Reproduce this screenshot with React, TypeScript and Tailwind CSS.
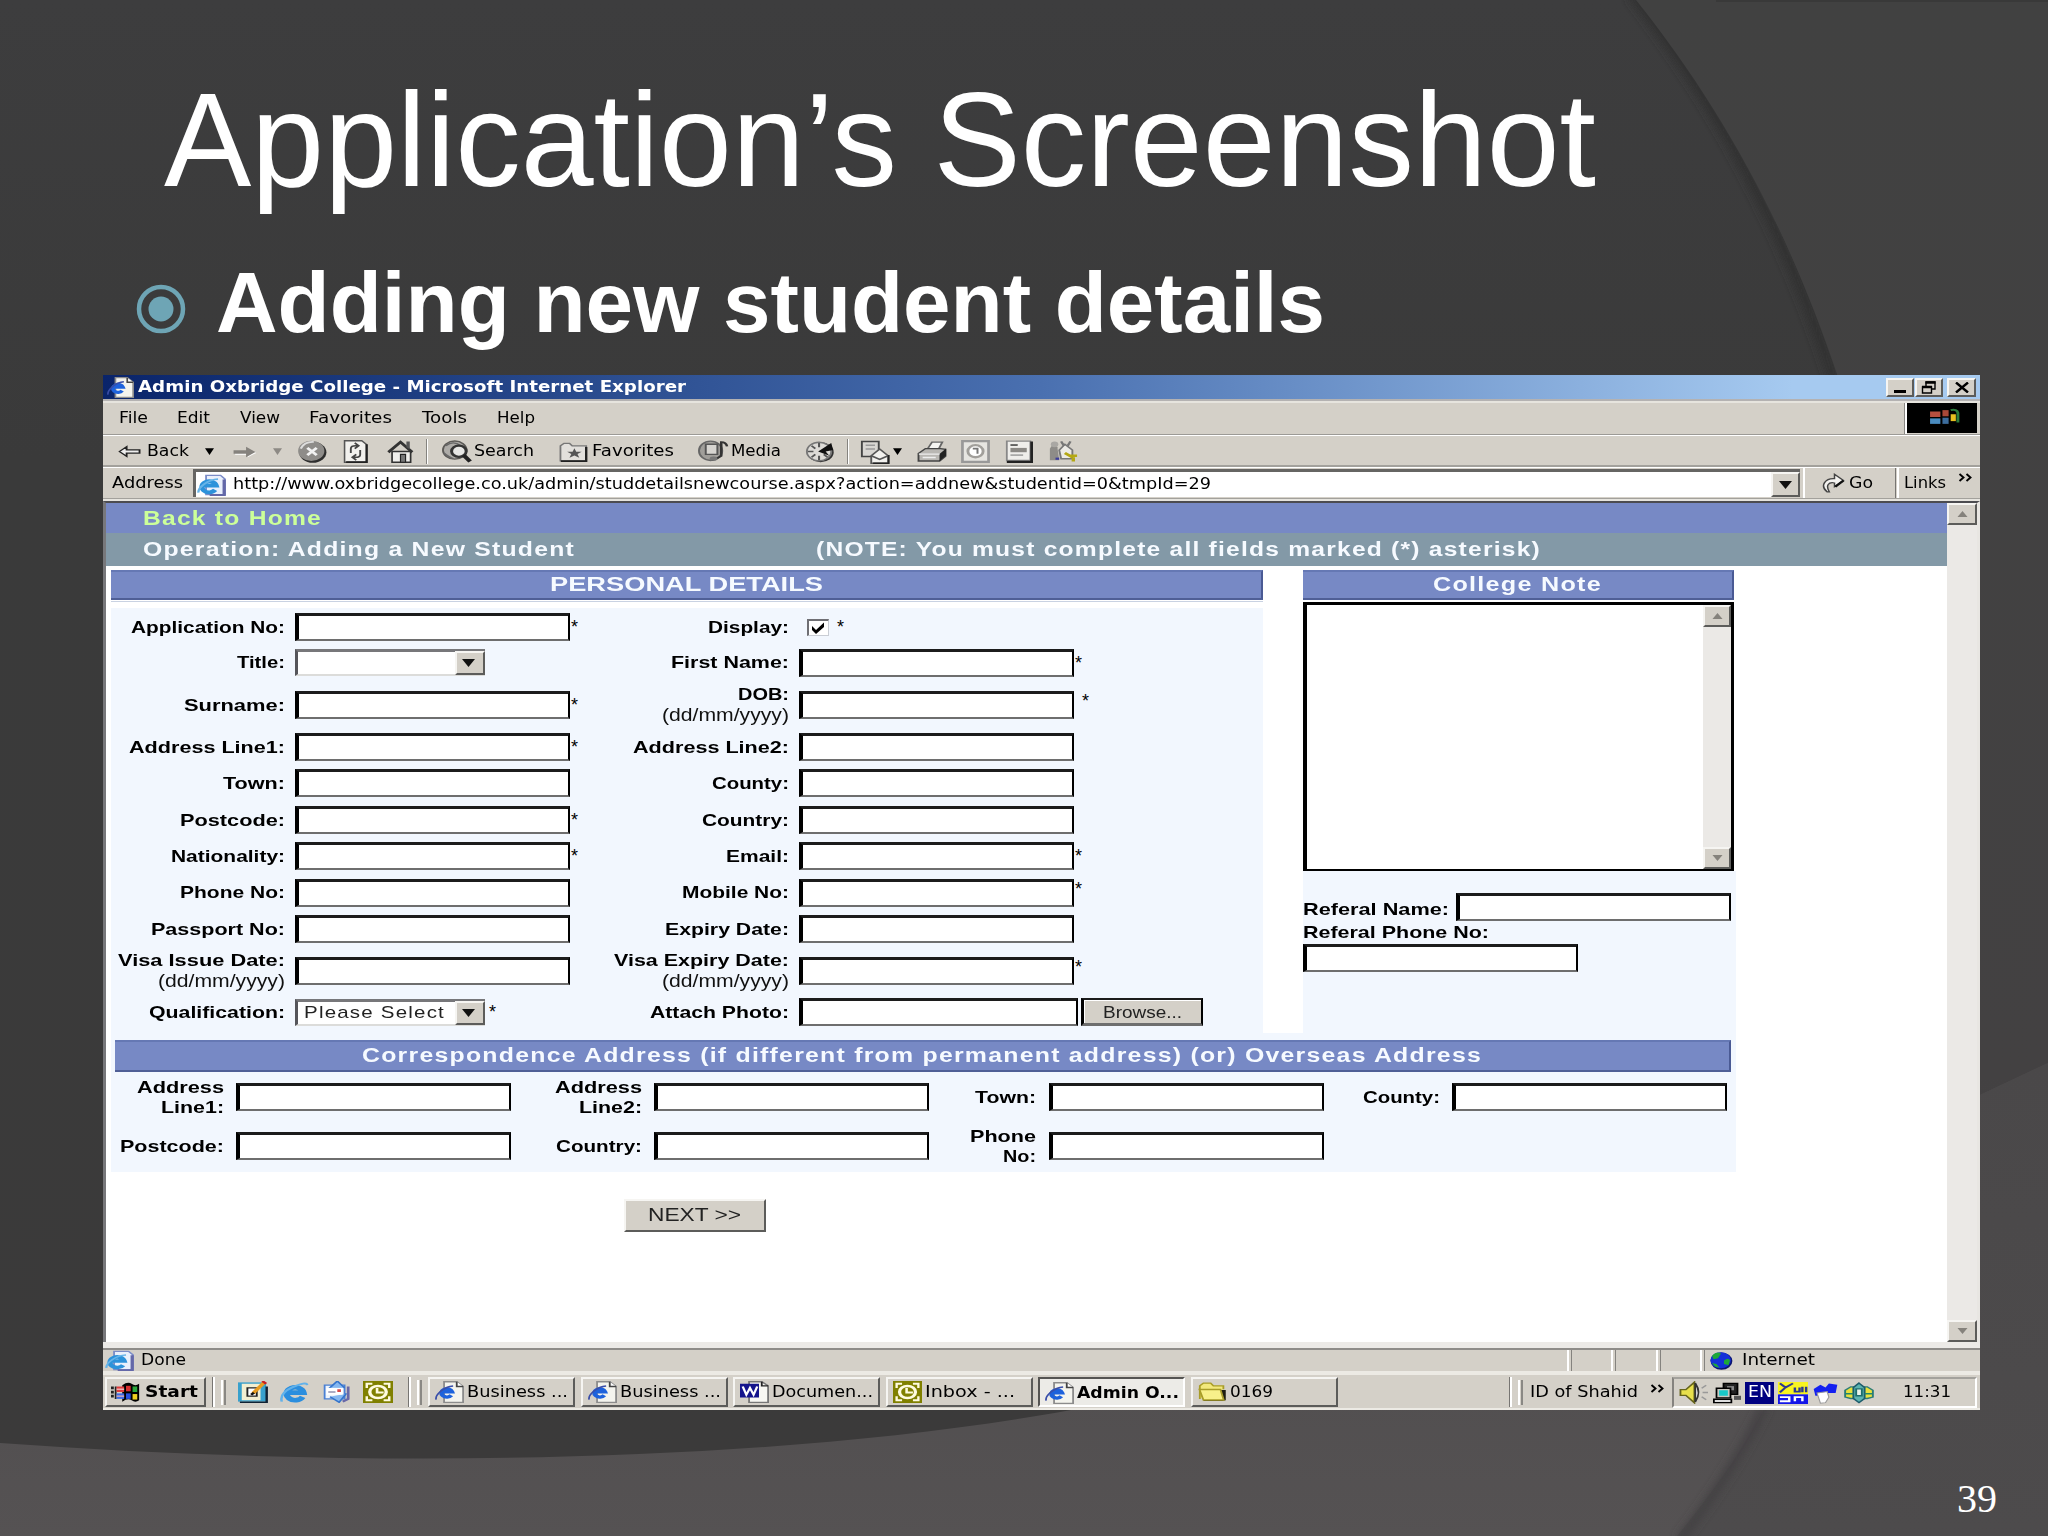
import { useLayoutEffect, useRef } from "react";
import type { ReactNode } from "react";

type FitProps = { w: number; className?: string; children: ReactNode };

// Single line of text stretched horizontally to a given width
const Fit = ({ w, className = "", children }: FitProps) => {
  const ref = useRef<HTMLSpanElement>(null);
  useLayoutEffect(() => {
    const el = ref.current;
    if (!el) return;
    el.style.transform = "none";
    const natural = el.getBoundingClientRect().width;
    el.style.transform = `scaleX(${w / natural})`;
  }, [w, children]);
  return (
    <span
      className={`block shrink-0 leading-none whitespace-nowrap ${className}`}
      style={{ width: w }}
    >
      <span ref={ref} className="inline-block origin-left">
        {children}
      </span>
    </span>
  );
};

type IconProps = { className?: string; children?: ReactNode };

const Icon = ({ className = "h-[23px] w-[29px]", children }: IconProps) => (
  <svg
    viewBox="0 0 16 16"
    preserveAspectRatio="none"
    className={`block shrink-0 ${className}`}
  >
    {children}
  </svg>
);

const IePage = ({ className }: IconProps) => (
  <Icon className={className}>
    <path d="M5 .5h7l3.5 3.5v11.5H5z" fill="#f4f4ee" stroke="#8c8c8c" />
    <path d="M12 .5v3.5h3.5" fill="#fff" stroke="#444" />
    <path d="M9 10.4A3 3 0 1 1 9.4 7.800H4.500" fill="none" stroke="#1d62dc" strokeWidth="2.400" />
    <path d="M.6 13.5C0 10 5 4 10 3.600" fill="none" stroke="#3a4ea8" />
  </Icon>
);

const IePageBlue = ({ className }: IconProps) => (
  <Icon className={className}>
    <path d="M5 1h8l2.4 2.6V15H5z" fill="#eaf0fc" stroke="#7b8cc8" />
    <path d="M15 4v11.5H7" fill="none" stroke="#6468a8" strokeWidth="1.8" />
    <path d="M10 11.6A4 4 0 1 1 10.6 8.4H4" fill="none" stroke="#2d92da" strokeWidth="2.800" />
    <path d="M.8 13.6C.4 10 6 4 11.6 3.8" fill="none" stroke="#67b4e8" strokeWidth="1.300" />
  </Icon>
);

const WinFlag = ({ className }: IconProps) => (
  <Icon className={className}>
    <path d="M6 3q3-3 5-1t4 0v12q-2 2-4 0t-5 1z" fill="#000" />
    <path d="M0 4h1.500v2H0zM0 7h1.500v2H0zM0 10h1.500v2H0zM2 4h1v9H2z" fill="#222" />
    <path d="M3 4h4v4H3z" fill="#e03c3c" />
    <path d="M3 9h4v4H3z" fill="#3c6ce8" />
    <path d="M3 6h4M3 11h4" stroke="#f0b0b0" />
    <path d="M8 3.5h2.500v4H8z" fill="#d83030" />
    <path d="M8 9h2.500v4H8z" fill="#2850e0" />
    <path d="M11.500 4H14v4h-2.500z" fill="#2aa83c" />
    <path d="M11.500 9.500H14v4h-2.500z" fill="#f0d020" />
  </Icon>
);

const Outlook = ({ className }: IconProps) => (
  <Icon className={className}>
    <path d="M0 0h16v16H0z" fill="#808000" />
    <path d="M2 5V2h3M11 2h3v3M14 11v3h-3M5 14H2v-3" fill="none" stroke="#fffbe0" strokeWidth="1.300" />
    <circle cx="8" cy="8" r="4.4" fill="#808000" stroke="#fffbe0" strokeWidth="1.8" />
    <path d="M7.5 5v3.4H11" fill="none" stroke="#fffbe0" strokeWidth="1.4" />
  </Icon>
);

const WordDoc = ({ className }: IconProps) => (
  <Icon className={className}>
    <path d="M5 .5h7l3.5 3V15.5H5z" fill="#f7f7f2" stroke="#777" />
    <path d="M12 .5v3h3.5" fill="none" stroke="#222" />
    <path d="M0 2h10.500v10H0z" fill="#14148c" />
    <path d="M1.5 4l2 6L5.5 5l2 5 2-6" fill="none" stroke="#fff" strokeWidth="1.3" />
  </Icon>
);

const Folder = ({ className }: IconProps) => (
  <Icon className={className}>
    <path d="M1 13V3.5L3 1.5h4l1.5 2H14V6" fill="#f2e87c" stroke="#a89c28" />
    <path d="M3.5 6.5h11.8V14l-2 .5H3z" fill="#1c1c10" />
    <path d="M.8 6.2h11.6l1.8 7.6H3z" fill="#f8f08a" stroke="#a89c28" />
  </Icon>
);

const Caret = ({ className = "text-black" }: IconProps) => (
  <svg viewBox="0 0 8 6" className={`block h-[7px] w-[9px] shrink-0 ${className}`}>
    <path d="M0 0h8L4 6z" fill="currentColor" />
  </svg>
);

const WideCaret = () => (
  <svg viewBox="0 0 13 8" className="block h-[8px] w-[13px] shrink-0">
    <path d="M0 0h13L6.500 8z" fill="#111" />
  </svg>
);

const Chevrons = () => (
  <svg viewBox="0 0 14 9" className="block h-[9px] w-[15px] shrink-0">
    <path d="M1 1l4 3.5L1 8M8 1l4 3.5L8 8" fill="none" stroke="#000" strokeWidth="1.9" />
  </svg>
);

const bevel =
  "border-2 border-t-[#f6f5f2] border-l-[#f6f5f2] border-r-[#5c5c5a] border-b-[#5c5c5a] bg-[#d4d0c8]";

const ScrollButton = ({ up = false }: { up?: boolean }) => (
  <div className={`flex h-[22px] shrink-0 items-center justify-center ${bevel}`}>
    <svg viewBox="0 0 10 6" className="h-[6px] w-[11px]">
      <path d={up ? "M5 0l5 6H0z" : "M0 0h10L5 6z"} fill="#85827c" />
    </svg>
  </div>
);

const Scrollbar = ({ className }: { className: string }) => (
  <div className={`flex flex-col justify-between bg-[#ebe9e6] ${className}`}>
    <ScrollButton up />
    <ScrollButton />
  </div>
);

const Field = ({ className = "w-[275px]" }: { className?: string }) => (
  <div
    className={`h-[28px] shrink-0 border-t-[3px] border-r-2 border-b-2 border-l-4 border-t-[#1c1c1c] border-r-black border-b-[#6e6e6e] border-l-black bg-white ${className}`}
  />
);

const Select = ({ text }: { text?: string }) => (
  <div className="flex h-[27px] w-[190px] shrink-0 items-center border-t-[3px] border-b-2 border-l-[3px] border-t-[#77777a] border-b-[#dcdcda] border-l-[#55555a] bg-white">
    <div className="flex-1 pl-[6px]">
      {text && (
        <Fit w={141} className="text-[17px] tracking-[1px] text-[#222]">
          {text}
        </Fit>
      )}
    </div>
    <div className={`flex h-[24px] w-[30px] items-center justify-center pr-[3px] ${bevel}`}>
      <WideCaret />
    </div>
  </div>
);

const Star = ({ className = "" }: { className?: string }) => (
  <span className={`pl-px text-[18px] leading-none ${className}`}>*</span>
);

type Label = { text: string; w: number; hint?: boolean };

const LabelText = ({ text, w, hint }: Label) => (
  <div className="flex flex-col items-end">
    <Fit w={w} className="text-[17px] font-bold">
      {text}
    </Fit>
    {hint && (
      <Fit w={127} className="mt-[3px] text-[18px] text-[#111]">
        (dd/mm/yyyy)
      </Fit>
    )}
  </div>
);

type FormRow = {
  h: string;
  left: Label;
  right: Label;
  leftControl: ReactNode;
  rightControl: ReactNode;
};

const starred = (
  <>
    <Field />
    <Star />
  </>
);

const rows: FormRow[] = [
  {
    h: "h-[36px]",
    left: { text: "Application No:", w: 154 },
    right: { text: "Display:", w: 81 },
    leftControl: starred,
    rightControl: (
      <>
        <div className="ml-[8px] h-[17px] w-[22px] border-t-2 border-r border-b border-l-2 border-t-[#6f6f74] border-r-[#c9cdd4] border-b-[#c9cdd4] border-l-[#6f6f74] bg-white">
          <svg viewBox="0 0 18 14" className="h-[14px] w-[18px]">
            <path d="M3 5l4 4 8-7.500v4.500L7 13 3 9z" fill="#000" />
          </svg>
        </div>
        <Star className="ml-[7px]" />
      </>
    ),
  },
  {
    h: "h-[35px]",
    left: { text: "Title:", w: 48 },
    right: { text: "First Name:", w: 118 },
    leftControl: <Select />,
    rightControl: starred,
  },
  {
    h: "h-[50px]",
    left: { text: "Surname:", w: 101 },
    right: { text: "DOB:", w: 51, hint: true },
    leftControl: starred,
    rightControl: (
      <>
        <Field />
        <Star className="-mt-2 ml-[7px]" />
      </>
    ),
  },
  {
    h: "h-[34px]",
    left: { text: "Address Line1:", w: 156 },
    right: { text: "Address Line2:", w: 156 },
    leftControl: starred,
    rightControl: <Field />,
  },
  {
    h: "h-[38px]",
    left: { text: "Town:", w: 62 },
    right: { text: "County:", w: 77 },
    leftControl: <Field />,
    rightControl: <Field />,
  },
  {
    h: "h-[36px]",
    left: { text: "Postcode:", w: 105 },
    right: { text: "Country:", w: 87 },
    leftControl: starred,
    rightControl: <Field />,
  },
  {
    h: "h-[36px]",
    left: { text: "Nationality:", w: 114 },
    right: { text: "Email:", w: 63 },
    leftControl: starred,
    rightControl: starred,
  },
  {
    h: "h-[37px]",
    left: { text: "Phone No:", w: 105 },
    right: { text: "Mobile No:", w: 107 },
    leftControl: <Field />,
    rightControl: (
      <>
        <Field />
        <Star className="-mt-2" />
      </>
    ),
  },
  {
    h: "h-[36px]",
    left: { text: "Passport No:", w: 134 },
    right: { text: "Expiry Date:", w: 124 },
    leftControl: <Field />,
    rightControl: <Field />,
  },
  {
    h: "h-[48px]",
    left: { text: "Visa Issue Date:", w: 167, hint: true },
    right: { text: "Visa Expiry Date:", w: 175, hint: true },
    leftControl: <Field />,
    rightControl: (
      <>
        <Field />
        <Star className="-mt-2" />
      </>
    ),
  },
  {
    h: "h-[34px]",
    left: { text: "Qualification:", w: 136 },
    right: { text: "Attach Photo:", w: 139 },
    leftControl: (
      <>
        <Select text="Please Select" />
        <Star className="ml-[3px]" />
      </>
    ),
    rightControl: (
      <>
        <Field className="w-[279px]" />
        <div className="ml-[3px] flex h-[28px] w-[122px] items-center justify-center border-t-2 border-r-2 border-b-[3px] border-l-[3px] border-t-[#1c1c1c] border-r-black border-b-[#6e6e6e] border-l-black bg-[#d4d0c8] pt-[2px] shadow-[inset_1px_1px_0_#fff]">
          <Fit w={79} className="text-[17px] text-[#222]">
            Browse...
          </Fit>
        </div>
      </>
    ),
  },
];

const Heading = ({ className = "", children }: { className?: string; children: ReactNode }) => (
  <div
    className={`flex items-center justify-center border-t-2 border-r-2 border-b-2 border-t-[#6578b4] border-r-[#4a5a94] border-b-[#4f5f96] bg-[#7789c5] pb-[3px] text-[20px] font-bold text-[#f6faff] ${className}`}
  >
    {children}
  </div>
);

const CorrLabel = ({ lines }: { lines: Label[] }) => (
  <div className="flex flex-col items-end gap-[3px]">
    {lines.map((line) => (
      <LabelText key={line.text} {...line} />
    ))}
  </div>
);

const TitleBar = () => (
  <div className="flex h-[24px] items-center bg-linear-to-r from-[#0a246a] via-[#4a70b0] via-50% to-[#a6caf0] to-90% pl-1">
    <IePage className="h-[21px] w-[27px]" />
    <Fit w={548} className="ml-[4px] font-['DejaVu_Sans'] text-[15px] font-bold text-white">
      Admin Oxbridge College - Microsoft Internet Explorer
    </Fit>
    <div className={`ml-auto flex h-[19px] w-[28px] items-end justify-center pb-[2px] ${bevel}`}>
      <div className="h-[3px] w-[12px] bg-black" />
    </div>
    <div className={`ml-[1px] flex h-[19px] w-[28px] items-center justify-center ${bevel}`}>
      <svg viewBox="0 0 16 13" className="h-[13px] w-[16px]">
        <path d="M5 5V1h9v7h-3M1.500 6h9v6h-9z" fill="none" stroke="#000" strokeWidth="1.400" />
        <path d="M4.500 1.500h10M1 6h10" stroke="#000" strokeWidth="2.400" />
      </svg>
    </div>
    <div className={`mr-[4px] ml-[4px] flex h-[19px] w-[29px] items-center justify-center ${bevel}`}>
      <svg viewBox="0 0 14 11" className="h-[11px] w-[14px]">
        <path d="M1 .5l12 10M13 .5l-12 10" stroke="#000" strokeWidth="2.400" />
      </svg>
    </div>
  </div>
);

const MenuBar = () => (
  <div className="flex h-[32px] items-center border-b border-[#9c9a96] pb-px pl-[16px] text-[15px]">
    <Fit w={29}>File</Fit>
    <Fit w={33} className="ml-[29px]">Edit</Fit>
    <Fit w={40} className="ml-[30px]">View</Fit>
    <Fit w={83} className="ml-[29px]">Favorites</Fit>
    <Fit w={45} className="ml-[30px]">Tools</Fit>
    <Fit w={38} className="ml-[30px]">Help</Fit>
    <div className="ml-auto h-[31px] w-[3px] border-r-2 border-l border-r-white border-l-[#8a8884]" />
    <div className="mr-[3px] flex h-[30px] w-[70px] items-center justify-center bg-black">
      <Icon className="mb-[2px] ml-[4px] h-[22px] w-[33px]">
        <path d="M1 4h5v4H1z" fill="#b8503f" />
        <path d="M1 9h5v4H1z" fill="#4a8cc0" />
        <path d="M7 3h3v4.500H7z" fill="#a84838" />
        <path d="M7 8.500h3V13H7z" fill="#3c6c9c" />
        <path d="M11 6h2.500v5H11z" fill="#e8c020" />
        <path d="M11 3q3-1 3.500 2v7" fill="none" stroke="#2c7c3c" strokeWidth="1.400" />
      </Icon>
    </div>
  </div>
);

const Separator = ({ className = "" }: { className?: string }) => (
  <div className={`h-[25px] w-[2px] shrink-0 border-r border-l border-r-white border-l-[#85837f] ${className}`} />
);

const ToolBar = () => (
  <div className="flex h-[32px] items-center border-t border-b-2 border-t-white border-b-[#a3a19c] pt-[2px] pl-[15px] text-[15px]">
    <Icon className="h-[13px] w-[23px]">
      <path d="M1 8l5-6v4h9v4H6v4z" fill="#eee" stroke="#222" strokeWidth="1.300" />
    </Icon>
    <Fit w={42} className="ml-[6px]">Back</Fit>
    <Caret className="ml-[16px] text-black" />
    <Icon className="ml-[18px] h-[14px] w-[25px]">
      <path d="M2 7.500h8V4l5.500 5-5.500 5v-3H2z" fill="#fff" />
      <path d="M1 6h8V2l6 6-6 6v-4H1z" fill="#85827d" />
    </Icon>
    <Caret className="ml-[16px] text-[#8d8a85]" />
    <Icon className="ml-[15px] h-[23px] w-[30px]">
      <circle cx="8.400" cy="8.600" r="7.300" fill="#2e2e2e" />
      <circle cx="7.600" cy="7.600" r="7" fill="#8e8c89" />
      <path d="M2 6q2-5 7-4.600" fill="none" stroke="#ddd" strokeWidth="1.200" />
      <path d="M5.500 5.500l5 5M10.500 5.500l-5 5" stroke="#f2f2f2" strokeWidth="1.600" />
    </Icon>
    <Icon className="ml-[16px] h-[23px] w-[25px]">
      <path d="M1 .5h11l3.500 3v12H1z" fill="#f2f1ee" stroke="#555" />
      <path d="M15 3v12.500H2" fill="none" stroke="#222" strokeWidth="1.300" />
      <path d="M5 9V6q0-2 3-2h1M11 7v3q0 2-3 2H7M7.500 2l2.500 2-2.500 2M8.500 10L6 12l2.500 2" fill="none" stroke="#444" strokeWidth="1.200" />
    </Icon>
    <Icon className="ml-[19px] h-[23px] w-[27px]">
      <path d="M3 8h11v7.500H3z" fill="#f0efec" stroke="#333" />
      <path d="M.8 8.500L8 1.500l7 7" fill="none" stroke="#333" strokeWidth="1.800" />
      <path d="M11.500 1v4l2 1.500V1z" fill="#555" />
      <path d="M8 10h3v5.500H8z" fill="#777" stroke="#222" strokeWidth=".7" />
    </Icon>
    <Separator className="ml-[12px]" />
    <Icon className="ml-[14px] h-[23px] w-[30px]">
      <circle cx="6.800" cy="7" r="6.300" fill="#aeaca8" stroke="#5c5a57" />
      <path d="M2 4q4-4 8 0M1 9q3 3 5 4" fill="none" stroke="#666" />
      <circle cx="9" cy="7.800" r="3.900" fill="#e6e6e4" stroke="#333" strokeWidth="1.600" />
      <path d="M11.500 10.500l3.500 4.500" stroke="#222" strokeWidth="2.400" />
    </Icon>
    <Fit w={60} className="ml-[2px]">Search</Fit>
    <Icon className="ml-[25px] h-[20px] w-[29px]">
      <path d="M.8 15V3l2-2h3l1.500 2H15v12z" fill="#e2e0dc" stroke="#777" />
      <path d="M15 4v11.300H1" fill="none" stroke="#222" strokeWidth="1.300" />
      <path d="M8.500 5l1 2.700h3l-2.300 1.800 1 3-2.700-1.700-2.700 1.700 1-3-2.300-1.800h3z" fill="#555" />
    </Icon>
    <Fit w={82} className="ml-[4px]">Favorites</Fit>
    <Icon className="ml-[24px] h-[23px] w-[31px]">
      <ellipse cx="6.500" cy="7.500" rx="6" ry="6.700" fill="#a09e9a" stroke="#666" />
      <path d="M4 3h6v7H4z" fill="#d6d4d0" stroke="#555" />
      <path d="M7 14q3-1 5-3V1.500q2.500 0 3 3" fill="none" stroke="#333" strokeWidth="1.300" />
      <ellipse cx="8" cy="13" rx="2" ry="1.500" fill="#777" />
    </Icon>
    <Fit w={50} className="ml-[2px]">Media</Fit>
    <Icon className="ml-[24px] h-[23px] w-[30px]">
      <circle cx="8.300" cy="8.500" r="7" fill="#333" />
      <circle cx="7.500" cy="8" r="6.500" fill="#dddbd7" stroke="#777" />
      <path d="M7.500 2v3M7.500 11v3M1.500 8h3M3.500 4l2 2M3.500 12l2-2M10 10l2 2" stroke="#555" strokeWidth="1.100" />
      <path d="M7 8l7-6 1 5-4 1 2 3z" fill="#111" />
    </Icon>
    <Separator className="ml-[12px]" />
    <Icon className="ml-[11px] h-[24px] w-[30px]">
      <path d="M1 1h9v10H1z" fill="#d8d6d2" stroke="#444" />
      <path d="M3 3.500h5M3 6h5" stroke="#999" />
      <path d="M6 10.500L10.500 6l4.500 4.500v5H6z" fill="#f2f1ee" stroke="#555" />
      <path d="M6 10.500l4.500 2.500 4.500-2.500" fill="none" stroke="#555" />
      <path d="M15.300 10v5.500H7" fill="none" stroke="#222" />
    </Icon>
    <Caret className="ml-[3px] text-black" />
    <Icon className="ml-[15px] h-[22px] w-[30px]">
      <path d="M5.500 6L8 .8h5.500L11.500 6z" fill="#f5f5f2" stroke="#666" />
      <path d="M.8 9l3.700-3.500h8L15.200 6v5L12 14.500H.8z" fill="#b9b7b3" stroke="#444" />
      <path d="M12 9.500l3.500-4v5L12 14.500z" fill="#222" />
      <path d="M1 9.500h11M3 12h7" stroke="#eee" />
    </Icon>
    <Icon className="ml-[14px] h-[23px] w-[29px]">
      <path d="M.8.800h14.400v14.400H.8z" fill="#e6e5e1" stroke="#999" strokeWidth="1.500" />
      <circle cx="8" cy="7.800" r="4.200" fill="#fff" stroke="#a19f9b" strokeWidth="1.600" />
      <path d="M6.500 6h2.600v3.500" fill="none" stroke="#777" strokeWidth="1.100" />
    </Icon>
    <Icon className="ml-[15px] h-[23px] w-[29px]">
      <path d="M1 .8h13v13.400H1z" fill="#efeeeb" stroke="#888" />
      <path d="M14.700 1v14.200H1" fill="none" stroke="#222" strokeWidth="1.500" />
      <path d="M3 3.500h4" stroke="#333" />
      <path d="M3 5.500h9v3H3z" fill="#8b8985" />
      <path d="M3 10.500h7" stroke="#999" />
    </Icon>
    <Icon className="ml-[14px] h-[23px] w-[30px]">
      <path d="M1 6q2-5 4-1l1 9H1z" fill="#8e8c88" />
      <circle cx="3.500" cy="3" r="2" fill="#a9a7a3" />
      <path d="M6 7l3-4 4 4v6H7z" fill="#ecebe6" stroke="#777" />
      <path d="M7 1l1.500 3M12 1l-1.500 3" stroke="#777" strokeWidth="1.300" />
      <path d="M9 9l4 3M12 11h3.500M13.500 12v3" stroke="#b4a814" strokeWidth="1.800" />
      <path d="M4 13h2" stroke="#3c3c9c" strokeWidth="1.500" />
    </Icon>
  </div>
);

const AddressBar = () => (
  <div className="flex h-[32px] items-center border-t border-b border-t-white border-b-[#a3a19c] pl-[9px] text-[15px]">
    <Fit w={71}>Address</Fit>
    <div className="ml-[10px] flex h-[28px] w-[1607px] items-center border-t-[3px] border-l-[3px] border-t-[#666563] border-l-[#666563] bg-white">
      <IePageBlue className="ml-[1px] h-[22px] w-[29px]" />
      <Fit w={978} className="ml-[7px] text-[15.500px]">
        http://www.oxbridgecollege.co.uk/admin/studdetailsnewcourse.aspx?action=addnew&amp;studentid=0&amp;tmpId=29
      </Fit>
      <div className={`ml-auto flex h-[25px] w-[29px] items-center justify-center ${bevel}`}>
        <WideCaret />
      </div>
    </div>
    <div className="ml-[3px] flex h-[30px] w-[92px] items-center border-l-2 border-white pl-[16px]">
      <Icon className="h-[20px] w-[24px]">
        <path d="M4 15C-1 10 3 4 9 4.500V1l6 5-6 5V8C5 7 3 10 5.500 15z" fill="#f4f3f0" stroke="#444" />
        <path d="M9.500 11l5.500-5" stroke="#111" strokeWidth="1.800" />
      </Icon>
      <Fit w={24} className="ml-[4px]">Go</Fit>
    </div>
    <div className="flex h-[30px] items-center border-l border-[#777572] pl-px">
      <div className="flex h-[30px] items-center border-l-2 border-white pl-[5px]">
        <Fit w={42}>Links</Fit>
        <div className="mb-3 ml-[12px]">
          <Chevrons />
        </div>
      </div>
    </div>
  </div>
);

const PersonalDetails = () => (
  <section className="w-[1152px]">
    <Heading className="h-[30px]">
      <Fit w={273}>PERSONAL DETAILS</Fit>
    </Heading>
    <div className="mt-[1px] h-[1px] bg-[#c9d2e2]" />
    <div className="mt-[6px] h-[425px] bg-[#f2f7fe] pt-px">
      {rows.map((row) => (
        <div
          key={row.left.text}
          className={`grid grid-cols-[174px_314px_190px_474px] items-center ${row.h}`}
        >
          <LabelText {...row.left} />
          <div className="flex items-center pl-[10px]">{row.leftControl}</div>
          <LabelText {...row.right} />
          <div className="flex items-center pl-[10px]">{row.rightControl}</div>
        </div>
      ))}
    </div>
  </section>
);

const CollegeNote = () => (
  <section className="w-[433px]">
    <Heading className="h-[30px] w-[431px]">
      <Fit w={169} className="tracking-[1px]">College Note</Fit>
    </Heading>
    <div className="mt-[2px] flex h-[269px] w-[431px] justify-end border-t-[3px] border-r-[3px] border-b-2 border-l-4 border-black bg-white">
      <Scrollbar className="w-[28px]" />
    </div>
    <div className="h-[162px] bg-[#f2f7fe] pt-[22px]">
      <div className="flex items-end">
        <Fit w={146} className="mb-[3px] text-[17px] font-bold">
          Referal Name:
        </Fit>
        <Field className="ml-[7px] w-[275px]" />
      </div>
      <Fit w={186} className="mt-[3px] text-[17px] font-bold">
        Referal Phone No:
      </Fit>
      <Field className="mt-[3px] w-[275px]" />
    </div>
  </section>
);

const Correspondence = () => (
  <section className="h-[139px] w-[1625px] bg-[#f2f7fe] pt-[7px]">
    <Heading className="ml-[4px] h-[32px] w-[1616px]">
      <Fit w={1120} className="tracking-[1px]">
        Correspondence Address (if different from permanent address) (or) Overseas Address
      </Fit>
    </Heading>
    <div className="grid grid-cols-[113px_287px_131px_288px_106px_288px_116px_287px] grid-rows-[50px_48px] items-center">
      <CorrLabel lines={[{ text: "Address", w: 87 }, { text: "Line1:", w: 63 }]} />
      <Field className="ml-[12px] w-[275px]" />
      <CorrLabel lines={[{ text: "Address", w: 87 }, { text: "Line2:", w: 63 }]} />
      <Field className="ml-[12px] w-[275px]" />
      <CorrLabel lines={[{ text: "Town:", w: 61 }]} />
      <Field className="ml-[13px] w-[275px]" />
      <CorrLabel lines={[{ text: "County:", w: 77 }]} />
      <Field className="ml-[12px] w-[275px]" />
      <CorrLabel lines={[{ text: "Postcode:", w: 104 }]} />
      <Field className="ml-[12px] w-[275px]" />
      <CorrLabel lines={[{ text: "Country:", w: 86 }]} />
      <Field className="ml-[12px] w-[275px]" />
      <CorrLabel lines={[{ text: "Phone", w: 66 }, { text: "No:", w: 33 }]} />
      <Field className="ml-[13px] w-[275px]" />
    </div>
  </section>
);

const Page = () => (
  <div className="flex h-[841px] border-t-2 border-r-[3px] border-l-[3px] border-t-[#4c4c50] border-r-[#e8e6e2] border-l-[#77777a] bg-white font-['Liberation_Sans']">
    <main className="flex-1">
      <div className="flex h-[30px] items-center bg-[#7789c5] pb-px pl-[37px] text-[20px] font-bold text-[#ccff99]">
        <Fit w={179} className="tracking-[1px]">Back to Home</Fit>
      </div>
      <div className="flex h-[33px] items-center bg-[#8399a7] pb-[2px] pl-[37px] text-[20px] font-bold text-[#f6faff]">
        <Fit w={432} className="tracking-[1px]">Operation: Adding a New Student</Fit>
        <Fit w={725} className="ml-[241px] tracking-[1px]">
          (NOTE: You must complete all fields marked (*) asterisk)
        </Fit>
      </div>
      <div className="pt-[4px] pl-[5px]">
        <div className="flex gap-[40px]">
          <PersonalDetails />
          <CollegeNote />
        </div>
        <Correspondence />
        <div
          className={`mt-[27px] ml-[513px] flex h-[33px] w-[142px] items-center justify-center pr-[2px] pb-[2px] ${bevel}`}
        >
          <Fit w={93} className="text-[19px] text-[#222]">
            NEXT &gt;&gt;
          </Fit>
        </div>
      </div>
    </main>
    <Scrollbar className="w-[30px]" />
  </div>
);

const StatusBar = () => (
  <div className="h-[33px] border-t-[6px] border-b-4 border-t-[#eceae7] border-b-[#eceae4] text-[15px]">
    <div className="flex h-[23px] items-center border-t-2 border-[#8e8c89] pl-[2px]">
      <IePageBlue className="h-[21px] w-[29px]" />
      <Fit w={45} className="ml-[7px]">Done</Fit>
      <div className="ml-auto flex h-[21px] w-[138px] justify-between">
        {[0, 1, 2, 3].map((i) => (
          <div key={i} className="w-[5px] border-r border-l-2 border-l-white border-r-[#85837f]" />
        ))}
      </div>
      <Icon className="ml-[4px] h-[19px] w-[24px]">
        <circle cx="8.300" cy="8.500" r="7.300" fill="#0c1470" />
        <circle cx="7.800" cy="7.800" r="6.800" fill="#1430d8" />
        <path d="M2 4q3-4 6-2L6 6 3 7zM10 8q3-3 4 0l-1 4-3-1zM2 10l3 1 2 3-3-1z" fill="#1ca838" />
      </Icon>
      <Fit w={73} className="mr-[165px] ml-[9px]">Internet</Fit>
    </div>
  </div>
);

type Task = { text: string; w: number; icon: ReactNode; active?: boolean };

const taskIcon = "h-[22px] w-[29px]";

const tasks: Task[] = [
  { text: "Business ...", w: 101, icon: <IePage className={taskIcon} /> },
  { text: "Business ...", w: 101, icon: <IePage className={taskIcon} /> },
  { text: "Documen...", w: 101, icon: <WordDoc className={taskIcon} /> },
  { text: "Inbox - ...", w: 90, icon: <Outlook className={taskIcon} /> },
  { text: "Admin O...", w: 102, icon: <IePage className={taskIcon} />, active: true },
  { text: "0169", w: 43, icon: <Folder className={taskIcon} /> },
];

const Grip = ({ className = "" }: { className?: string }) => (
  <div className={`flex items-center gap-[6px] ${className}`}>
    <div className="h-[30px] w-[3px] border-r-2 border-l border-r-white border-l-[#777572]" />
    <div className="h-[25px] w-[5px] border-r-2 border-l-2 border-r-[#8a8884] border-l-white" />
  </div>
);

const TaskBar = () => (
  <div className="flex h-[35px] items-center border-b-2 border-[#eceae4] pt-px pl-[2px] text-[15px]">
    <div className={`flex h-[30px] w-[101px] items-center pl-[4px] ${bevel}`}>
      <WinFlag className="h-[22px] w-[30px]" />
      <Fit w={53} className="ml-[4px] pt-px font-bold">Start</Fit>
    </div>
    <Grip className="ml-[6px]" />
    <Icon className="ml-[12px] h-[22px] w-[30px]">
      <path d="M0 1h15v14H0z" fill="#38a0cc" />
      <path d="M2 2h10v12H2z" fill="#f3efd2" />
      <path d="M15.300 4v11.500H1" fill="none" stroke="#123" strokeWidth="1.300" />
      <path d="M5 5h5v6H5z" fill="#fff" stroke="#222" />
      <path d="M8 9l6-8" stroke="#e89c20" strokeWidth="2.200" />
      <path d="M13 0l2 2" stroke="#c82020" strokeWidth="1.500" />
      <path d="M7 10l1.500-1.500" stroke="#111" strokeWidth="1.500" />
    </Icon>
    <Icon className="ml-[12px] h-[22px] w-[29px]">
      <path d="M12.500 11.500A4.700 4.700 0 1 1 13 8.500H4" fill="none" stroke="#2b8ede" strokeWidth="3.400" />
      <path d="M1 15q-1.500-6 6-10.500T15 3" fill="none" stroke="#62b2ea" strokeWidth="1.400" />
    </Icon>
    <Icon className="ml-[12px] h-[22px] w-[29px]">
      <path d="M2 3h11v10H2z" fill="#eef4fc" stroke="#4a80d4" />
      <path d="M4 6l5-6 4 5M14 9l-4 6.500-5-4" fill="#86b8f0" stroke="#3474cc" />
      <path d="M3 5h9v5H3z" fill="#fff" />
      <path d="M9 6h2v2H9z" fill="#d84848" />
      <path d="M15 4v9l-3 2" fill="none" stroke="#6868a8" strokeWidth="1.500" />
      <path d="M4 8h4" stroke="#88a" />
    </Icon>
    <Outlook className="ml-[13px] h-[22px] w-[30px]" />
    <Grip className="ml-[15px]" />
    <div className="ml-[6px] flex gap-[5.500px]">
      {tasks.map((task, i) => (
        <div
          key={i}
          className={
            task.active
              ? "flex h-[30px] w-[147px] items-center border-2 border-t-[#555452] border-r-white border-b-white border-l-[#555452] bg-[#ecebe7] pt-[2px] pl-[5px] font-bold"
              : `flex h-[30px] w-[147px] items-center pl-[5px] ${bevel}`
          }
        >
          {task.icon}
          <Fit w={task.w} className="ml-[3px] pt-px">
            {task.text}
          </Fit>
        </div>
      ))}
    </div>
    <Grip className="ml-auto" />
    <Fit w={108} className="ml-[7px]">ID of Shahid</Fit>
    <div className="mb-2 ml-[12px]">
      <Chevrons />
    </div>
    <div className="mr-[3px] ml-[7px] flex h-[31px] w-[305px] items-center border-t-2 border-r-2 border-b-2 border-l-2 border-t-[#a3a19c] border-r-white border-b-white border-l-[#85837f] pt-px pl-[5px]">
      <Icon>
        <path d="M.8 6h3L8.500.800v14.400L3.800 10h-3z" fill="#e8e04c" stroke="#66641c" />
        <path d="M9 1.500q3.500 6.500 0 13z" fill="#fff" stroke="#333" />
        <path d="M12.500 5L15 3M13 8h3M12.500 11l2.500 2" stroke="#999" />
      </Icon>
      <Icon className="ml-[5px] h-[22px] w-[28px]">
        <path d="M6 1h8v8H6z" fill="#222" stroke="#000" />
        <path d="M8 3h4v3H8z" fill="#888" />
        <path d="M12 10h4v3h-4z" fill="#555" />
        <path d="M2 4.500h8v7H2z" fill="#c8c8c0" stroke="#000" />
        <path d="M3.500 6h5v4h-5z" fill="#18c8c8" />
        <path d="M.5 12.500h10v2.500H.5z" fill="#ddd" stroke="#000" />
      </Icon>
      <div className="ml-[4px] flex h-[22px] w-[29px] items-center justify-center bg-[#000080] text-white">
        <Fit w={24} className="text-[15px]">EN</Fit>
      </div>
      <Icon className="ml-[4px] h-[22px] w-[30px]">
        <path d="M0 0h16v9H0z" fill="#f8f420" />
        <path d="M0 9h16v7H0z" fill="#1414e8" />
        <path d="M1 1l3 3 4-3M4 4L1 7.500M9 4v3h2.500V4M13 3.500v4M15 3.500v4" fill="none" stroke="#2c3890" strokeWidth="1.300" />
        <path d="M1 11h5v3H1M9 14v-3h4v3" fill="none" stroke="#fff" strokeWidth="1.300" />
      </Icon>
      <Icon className="ml-[4px] h-[22px] w-[27px]">
        <path d="M1 5l4-3 3 2 2-3 5 1-1 6H9v2H2z" fill="#1420f0" />
        <path d="M3 8l6-1 1 4-2 4-3 .5z" fill="#fff" stroke="#999" strokeWidth=".7" />
      </Icon>
      <Icon className="ml-[5px] h-[22px] w-[30px]">
        <path d="M.6 6l3-2.500h8.800l3 2.500v5l-3 1H3.600l-3-1z" fill="#e8e03c" stroke="#2c7c78" />
        <path d="M8 .8L11 4v8l-3 3-3-3V4z" fill="#5cb4b0" stroke="#1c5c6c" />
        <path d="M6.500 5h3v5h-3z" fill="#e8f4ec" stroke="#1c6c6c" />
        <path d="M1 8.500h4M11 8.500h4" stroke="#286" strokeWidth="1" />
      </Icon>
      <Fit w={48} className="ml-[29px]">11:31</Fit>
    </div>
  </div>
);

const Backdrop = () => (
  <svg viewBox="0 0 2048 1536" className="absolute inset-0 h-full w-full">
    <defs>
      <linearGradient id="base" x1="0" y1="0" x2="0" y2="1">
        <stop offset="0" stopColor="#3d3d3e" />
        <stop offset=".3" stopColor="#3a3a3a" />
        <stop offset="1" stopColor="#3b3a3a" />
      </linearGradient>
      <linearGradient id="side" x1="0" y1="0" x2="0" y2="1">
        <stop offset="0" stopColor="#414141" />
        <stop offset=".7" stopColor="#434142" />
        <stop offset="1" stopColor="#4b494a" />
      </linearGradient>
      <linearGradient id="floor" x1="0" y1="0" x2="0" y2="1">
        <stop offset="0" stopColor="#4b494a" />
        <stop offset="1" stopColor="#555253" />
      </linearGradient>
      <linearGradient id="floorSide" x1="0" y1="0" x2="0" y2="1">
        <stop offset="0" stopColor="#4a4849" />
        <stop offset="1" stopColor="#4d4b4c" />
      </linearGradient>
      <filter id="soft" x="-20%" y="-20%" width="140%" height="140%">
        <feGaussianBlur stdDeviation="4" />
      </filter>
    </defs>
    <path d="M0 0h2048v1536H0z" fill="url(#base)" />
    <path d="M1632 -6C1717 105 1784 225 1834 380" fill="none" stroke="#303030" strokeWidth="11" filter="url(#soft)" />
    <path d="M1636 0C1720 105 1787 225 1837 374C1960 760 1900 1150 1763 1411L1677 1536H2048V0z" fill="url(#side)" />
    <path d="M0 1443C400 1472 800 1460 1071 1410L1980 1095L2048 1063V1536H0z" fill="url(#floor)" />
    <path d="M1763 1411Q1735 1465 1677 1536H2048V1063L1980 1095z" fill="url(#floorSide)" />
    <path d="M1765 1405Q1737 1465 1680 1540" fill="none" stroke="#434142" strokeWidth="8" filter="url(#soft)" />
    <path d="M1716 1h332" stroke="#393939" strokeWidth="2" />
  </svg>
);

const App = () => {
  return (
    <div className="relative h-[1536px] w-[2048px] overflow-hidden bg-[#3b3b3b] font-['Liberation_Sans',sans-serif]">
      <Backdrop />
      <div className="relative flex h-full flex-col">
        <h1 className="flex h-[230px] items-end pb-[23px] pl-[164px] text-[133px] text-white">
          <Fit w={1432}>Application’s Screenshot</Fit>
        </h1>
        <h2 className="flex h-[145px] items-center pl-[136px] text-[85px] font-bold text-white">
          <svg viewBox="0 0 50 50" className="mt-[12px] h-[50px] w-[50px]">
            <circle cx="25" cy="25" r="22" fill="none" stroke="#6ea5b5" strokeWidth="4.500" />
            <circle cx="25" cy="25" r="12.500" fill="#6ea5b5" />
          </svg>
          <Fit w={1109} className="ml-[30px]">Adding new student details</Fit>
        </h2>
        <div className="ml-[103px] h-[1035px] w-[1877px] bg-[#d4d0c8] font-['DejaVu_Sans',sans-serif] text-black">
          <TitleBar />
          <div className="h-[4px] border-t-2 border-t-[#b4b2b2] bg-[#e6e4de]" />
          <MenuBar />
          <ToolBar />
          <AddressBar />
          <div className="h-[2px] bg-[#e6e4de]" />
          <Page />
          <StatusBar />
          <TaskBar />
        </div>
        <div className="mt-auto flex justify-end pr-[51px] pb-[17px] font-['Liberation_Serif'] text-[40px] text-white">
          <Fit w={40}>39</Fit>
        </div>
      </div>
    </div>
  );
};

export default App;
